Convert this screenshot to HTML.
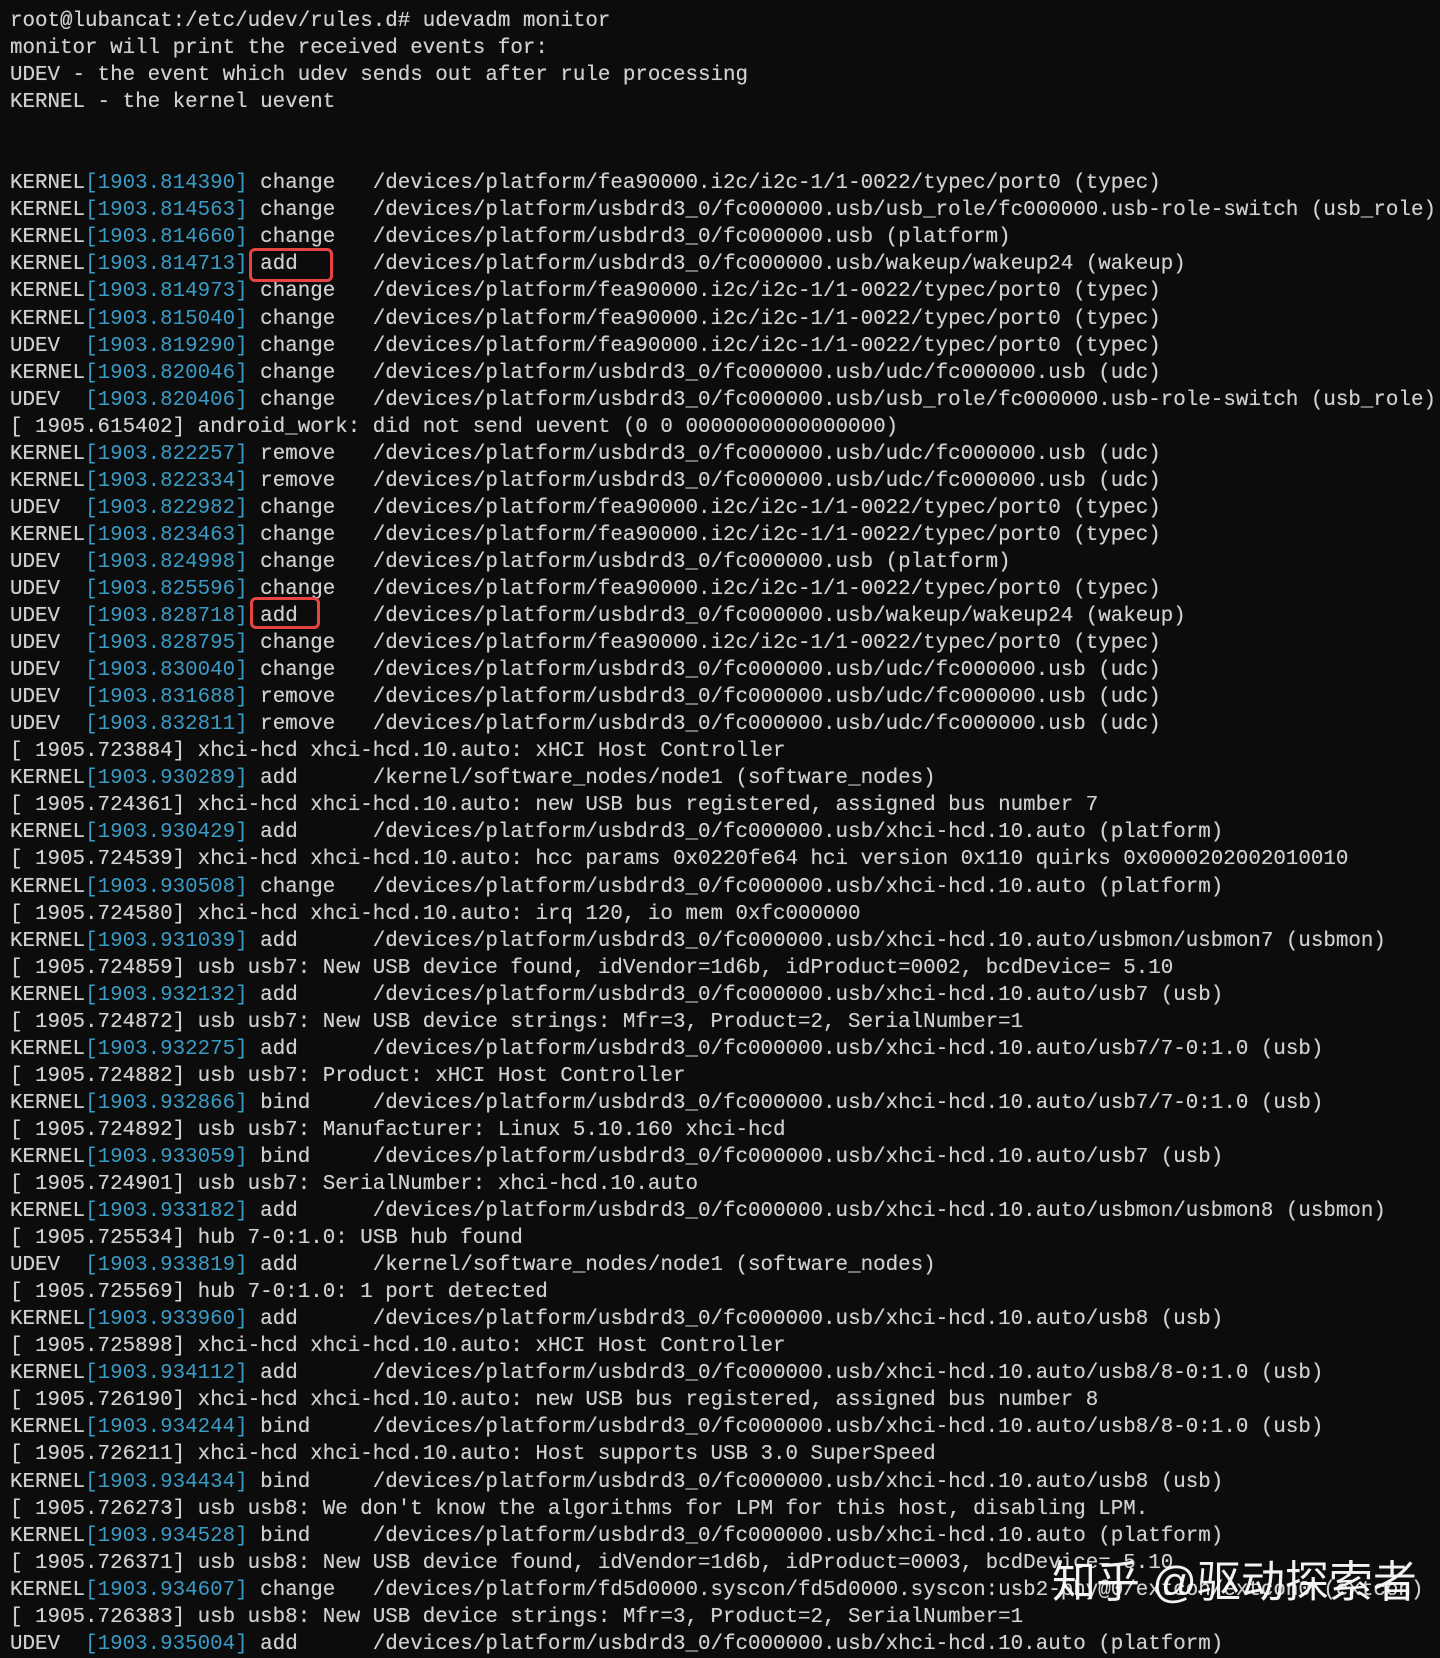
<!DOCTYPE html>
<html><head><meta charset="utf-8"><style>
html,body{margin:0;padding:0;background:#0c0c0c;width:1440px;height:1634px;overflow:hidden}
pre{position:absolute;left:10px;top:8px;margin:0;font-family:"Liberation Mono",monospace;font-size:20.85px;line-height:27.05px;color:#d0d0d0;white-space:pre;text-shadow:0 0 0.4px #d0d0d0}
.c{color:#3a9cc6;text-shadow:none}
.box{position:absolute;border:3px solid #e84343;border-radius:6px;box-sizing:border-box}
.wm{position:absolute;left:1052px;top:1546px;font-family:"Liberation Sans","Noto Sans CJK SC",sans-serif;font-size:44px;color:#fff;white-space:nowrap;opacity:.95}
</style></head><body>
<pre>root@lubancat:/etc/udev/rules.d# udevadm monitor
monitor will print the received events for:
UDEV - the event which udev sends out after rule processing
KERNEL - the kernel uevent


KERNEL<span class="c">[1903.814390]</span> change   /devices/platform/fea90000.i2c/i2c-1/1-0022/typec/port0 (typec)
KERNEL<span class="c">[1903.814563]</span> change   /devices/platform/usbdrd3_0/fc000000.usb/usb_role/fc000000.usb-role-switch (usb_role)
KERNEL<span class="c">[1903.814660]</span> change   /devices/platform/usbdrd3_0/fc000000.usb (platform)
KERNEL<span class="c">[1903.814713]</span> add      /devices/platform/usbdrd3_0/fc000000.usb/wakeup/wakeup24 (wakeup)
KERNEL<span class="c">[1903.814973]</span> change   /devices/platform/fea90000.i2c/i2c-1/1-0022/typec/port0 (typec)
KERNEL<span class="c">[1903.815040]</span> change   /devices/platform/fea90000.i2c/i2c-1/1-0022/typec/port0 (typec)
UDEV  <span class="c">[1903.819290]</span> change   /devices/platform/fea90000.i2c/i2c-1/1-0022/typec/port0 (typec)
KERNEL<span class="c">[1903.820046]</span> change   /devices/platform/usbdrd3_0/fc000000.usb/udc/fc000000.usb (udc)
UDEV  <span class="c">[1903.820406]</span> change   /devices/platform/usbdrd3_0/fc000000.usb/usb_role/fc000000.usb-role-switch (usb_role)
[ 1905.615402] android_work: did not send uevent (0 0 0000000000000000)
KERNEL<span class="c">[1903.822257]</span> remove   /devices/platform/usbdrd3_0/fc000000.usb/udc/fc000000.usb (udc)
KERNEL<span class="c">[1903.822334]</span> remove   /devices/platform/usbdrd3_0/fc000000.usb/udc/fc000000.usb (udc)
UDEV  <span class="c">[1903.822982]</span> change   /devices/platform/fea90000.i2c/i2c-1/1-0022/typec/port0 (typec)
KERNEL<span class="c">[1903.823463]</span> change   /devices/platform/fea90000.i2c/i2c-1/1-0022/typec/port0 (typec)
UDEV  <span class="c">[1903.824998]</span> change   /devices/platform/usbdrd3_0/fc000000.usb (platform)
UDEV  <span class="c">[1903.825596]</span> change   /devices/platform/fea90000.i2c/i2c-1/1-0022/typec/port0 (typec)
UDEV  <span class="c">[1903.828718]</span> add      /devices/platform/usbdrd3_0/fc000000.usb/wakeup/wakeup24 (wakeup)
UDEV  <span class="c">[1903.828795]</span> change   /devices/platform/fea90000.i2c/i2c-1/1-0022/typec/port0 (typec)
UDEV  <span class="c">[1903.830040]</span> change   /devices/platform/usbdrd3_0/fc000000.usb/udc/fc000000.usb (udc)
UDEV  <span class="c">[1903.831688]</span> remove   /devices/platform/usbdrd3_0/fc000000.usb/udc/fc000000.usb (udc)
UDEV  <span class="c">[1903.832811]</span> remove   /devices/platform/usbdrd3_0/fc000000.usb/udc/fc000000.usb (udc)
[ 1905.723884] xhci-hcd xhci-hcd.10.auto: xHCI Host Controller
KERNEL<span class="c">[1903.930289]</span> add      /kernel/software_nodes/node1 (software_nodes)
[ 1905.724361] xhci-hcd xhci-hcd.10.auto: new USB bus registered, assigned bus number 7
KERNEL<span class="c">[1903.930429]</span> add      /devices/platform/usbdrd3_0/fc000000.usb/xhci-hcd.10.auto (platform)
[ 1905.724539] xhci-hcd xhci-hcd.10.auto: hcc params 0x0220fe64 hci version 0x110 quirks 0x0000202002010010
KERNEL<span class="c">[1903.930508]</span> change   /devices/platform/usbdrd3_0/fc000000.usb/xhci-hcd.10.auto (platform)
[ 1905.724580] xhci-hcd xhci-hcd.10.auto: irq 120, io mem 0xfc000000
KERNEL<span class="c">[1903.931039]</span> add      /devices/platform/usbdrd3_0/fc000000.usb/xhci-hcd.10.auto/usbmon/usbmon7 (usbmon)
[ 1905.724859] usb usb7: New USB device found, idVendor=1d6b, idProduct=0002, bcdDevice= 5.10
KERNEL<span class="c">[1903.932132]</span> add      /devices/platform/usbdrd3_0/fc000000.usb/xhci-hcd.10.auto/usb7 (usb)
[ 1905.724872] usb usb7: New USB device strings: Mfr=3, Product=2, SerialNumber=1
KERNEL<span class="c">[1903.932275]</span> add      /devices/platform/usbdrd3_0/fc000000.usb/xhci-hcd.10.auto/usb7/7-0:1.0 (usb)
[ 1905.724882] usb usb7: Product: xHCI Host Controller
KERNEL<span class="c">[1903.932866]</span> bind     /devices/platform/usbdrd3_0/fc000000.usb/xhci-hcd.10.auto/usb7/7-0:1.0 (usb)
[ 1905.724892] usb usb7: Manufacturer: Linux 5.10.160 xhci-hcd
KERNEL<span class="c">[1903.933059]</span> bind     /devices/platform/usbdrd3_0/fc000000.usb/xhci-hcd.10.auto/usb7 (usb)
[ 1905.724901] usb usb7: SerialNumber: xhci-hcd.10.auto
KERNEL<span class="c">[1903.933182]</span> add      /devices/platform/usbdrd3_0/fc000000.usb/xhci-hcd.10.auto/usbmon/usbmon8 (usbmon)
[ 1905.725534] hub 7-0:1.0: USB hub found
UDEV  <span class="c">[1903.933819]</span> add      /kernel/software_nodes/node1 (software_nodes)
[ 1905.725569] hub 7-0:1.0: 1 port detected
KERNEL<span class="c">[1903.933960]</span> add      /devices/platform/usbdrd3_0/fc000000.usb/xhci-hcd.10.auto/usb8 (usb)
[ 1905.725898] xhci-hcd xhci-hcd.10.auto: xHCI Host Controller
KERNEL<span class="c">[1903.934112]</span> add      /devices/platform/usbdrd3_0/fc000000.usb/xhci-hcd.10.auto/usb8/8-0:1.0 (usb)
[ 1905.726190] xhci-hcd xhci-hcd.10.auto: new USB bus registered, assigned bus number 8
KERNEL<span class="c">[1903.934244]</span> bind     /devices/platform/usbdrd3_0/fc000000.usb/xhci-hcd.10.auto/usb8/8-0:1.0 (usb)
[ 1905.726211] xhci-hcd xhci-hcd.10.auto: Host supports USB 3.0 SuperSpeed
KERNEL<span class="c">[1903.934434]</span> bind     /devices/platform/usbdrd3_0/fc000000.usb/xhci-hcd.10.auto/usb8 (usb)
[ 1905.726273] usb usb8: We don't know the algorithms for LPM for this host, disabling LPM.
KERNEL<span class="c">[1903.934528]</span> bind     /devices/platform/usbdrd3_0/fc000000.usb/xhci-hcd.10.auto (platform)
[ 1905.726371] usb usb8: New USB device found, idVendor=1d6b, idProduct=0003, bcdDevice= 5.10
KERNEL<span class="c">[1903.934607]</span> change   /devices/platform/fd5d0000.syscon/fd5d0000.syscon:usb2-phy@0/extcon/extcon0 (extcon)
[ 1905.726383] usb usb8: New USB device strings: Mfr=3, Product=2, SerialNumber=1
UDEV  <span class="c">[1903.935004]</span> add      /devices/platform/usbdrd3_0/fc000000.usb/xhci-hcd.10.auto (platform)</pre>
<div class="box" style="left:249px;top:248px;width:84px;height:34px"></div>
<div class="box" style="left:250px;top:597px;width:70px;height:32px"></div>
<div class="wm">知乎 @驱动探索者</div>
</body></html>
